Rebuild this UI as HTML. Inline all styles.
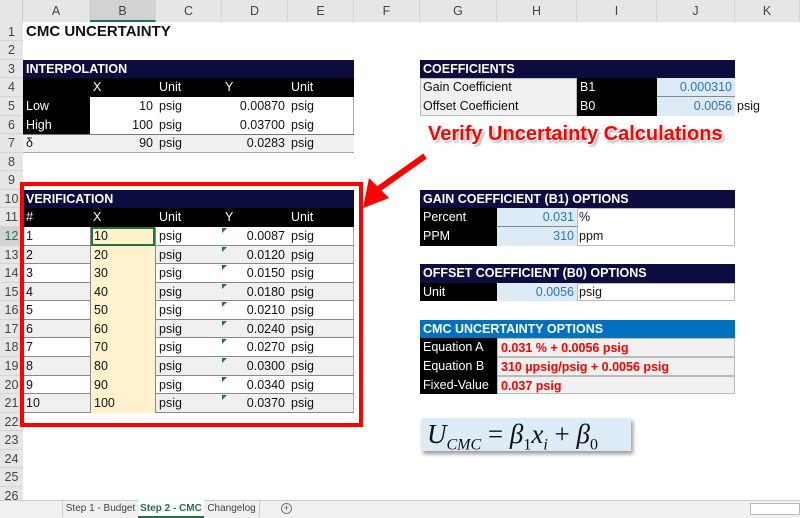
<!DOCTYPE html>
<html><head><meta charset="utf-8"><style>
*{margin:0;padding:0;box-sizing:border-box}
body{width:800px;height:518px;overflow:hidden;background:#fff;font-family:"Liberation Sans",Arial,sans-serif;font-size:12.5px;color:#111;position:relative}
.a{position:absolute;white-space:nowrap;line-height:18px}
.hdr{background:#e6e6e6;color:#444;text-align:center;font-size:12.5px}
.nv{background:#0d0c3f;color:#fff;font-weight:bold}
.bk{background:#000;color:#fff}
.gr{background:#f0f0f0}
.lb{background:#ddebf7;color:#2e75b6;text-align:right;padding-right:3px}
.r{text-align:right;padding-right:3px}
.p{padding-left:3px}
.bd{border-bottom:1px solid #888}
</style></head><body>
<div id="g"></div>
<script>
var g=document.getElementById('g'),h='';
function T(n){return 22.7+(n-1)*18.57}
var cx=[0,23,90,156,222,288,354,420,497,577,657,735,800];
var cn='ABCDEFGHIJK';
function d(x,y,w,hh,cls,txt,st){h+='<div class="a '+(cls||'')+'" style="left:'+x+'px;top:'+y+'px;width:'+w+'px;height:'+hh+'px;'+(st||'')+'">'+(txt||'')+'</div>'}
d(0,0,800,22,'hdr','', 'border-bottom:1px solid #ccc');
d(0,0,23,518,'hdr','','border-right:1px solid #ccc');
for(var i=0;i<11;i++){d(cx[i+1],0,cx[i+2]-cx[i+1],22,'hdr',cn[i],'line-height:22px;border-right:1px solid #d4d4d4;'+(i==1?'background:#d2d2d2;border-bottom:2px solid #217346;':''))}
for(var n=1;n<=26;n++){d(0,T(n),23,18.57,'hdr',n,'border-bottom:1px solid #d4d4d4;line-height:18px;'+(n==12?'color:#217346;background:#d2d2d2':''))}
d(26,T(1),300,18.6,'','CMC UNCERTAINTY','font-weight:bold;font-size:15px');
var rh=18.57;
d(23,T(3),331,rh,'nv p','INTERPOLATION');
d(23,T(4),331,rh,'bk');
d(90,T(4),66,rh,'bk p','X');d(156,T(4),66,rh,'bk p','Unit');d(222,T(4),66,rh,'bk p','Y');d(288,T(4),66,rh,'bk p','Unit');
d(23,T(5),67,rh,'bk p','Low');d(23,T(6),67,rh,'bk p','High');
d(90,T(5),264,rh*2,'','','border-right:1px solid #aaa');
d(90,T(5),66,rh,'r','10');d(156,T(5),66,rh,'p','psig');d(222,T(5),66,rh,'r','0.00870');d(288,T(5),66,rh,'p','psig');
d(90,T(6),66,rh,'r','100');d(156,T(6),66,rh,'p','psig');d(222,T(6),66,rh,'r','0.03700');d(288,T(6),66,rh,'p','psig');
d(23,T(7),331,rh,'gr','','border-top:1px solid #777;border-bottom:1px solid #aaa');
d(23,T(7),67,rh,'p','δ');d(90,T(7),66,rh,'r','90');d(156,T(7),66,rh,'p','psig');d(222,T(7),66,rh,'r','0.0283');d(288,T(7),66,rh,'p','psig');
d(23,T(10),331,rh,'nv p','VERIFICATION');
d(23,T(11),331,rh,'bk');
d(23,T(11),67,rh,'bk p','#');d(90,T(11),66,rh,'bk p','X');d(156,T(11),66,rh,'bk p','Unit');d(222,T(11),66,rh,'bk p','Y');d(288,T(11),66,rh,'bk p','Unit');
var ys=['0.0087','0.0120','0.0150','0.0180','0.0210','0.0240','0.0270','0.0300','0.0340','0.0370'];
for(var k=0;k<10;k++){var y=T(12+k);
d(23,y,331,rh,(k%2?'gr':'')+' bd','','border-right:1px solid #aaa');
d(23,y,67,rh,'p',k+1);
d(90,y,66,rh,'p',(k+1)*10,'background:#fff2cc;border-left:1px solid #888;border-right:1px solid #888;'+(k==0?'box-shadow:inset 0 0 0 2px #217346;':''));
d(156,y,66,rh,'p','psig');
d(222,y,66,rh,'r',ys[k]);d(288,y,66,rh,'p','psig');
d(222,y+1,0,0,'','','border-top:5px solid #217346;border-right:5px solid transparent');}
d(20,182,343,245,'','','border:4px solid #f00');
d(420,T(3),315,rh,'nv p','COEFFICIENTS');
d(420,T(4),157,rh*2,'gr','','border:1px solid #bbb');
d(420,T(4),157,rh,'p','Gain Coefficient');d(420,T(5),157,rh,'p','Offset Coefficient');
d(577,T(4),80,rh,'bk p','B1');d(577,T(5),80,rh,'bk p','B0');
d(657,T(4),78,rh,'lb','0.000310','border-bottom:1px solid #888');d(657,T(5),78,rh,'lb','0.0056');d(737,T(5),50,rh,'','psig');
d(420,T(10),315,rh,'nv p','GAIN COEFFICIENT (B1) OPTIONS');
d(420,T(11),77,rh*2,'bk');d(420,T(11),77,rh,'bk p','Percent');d(420,T(12),77,rh,'bk p','PPM');
d(497,T(11),80,rh,'lb','0.031','border-bottom:1px solid #888');d(497,T(12),80,rh,'lb','310');
d(577,T(11),158,rh*2,'','','border:1px solid #bbb');
d(579,T(11),80,rh,'','%');d(579,T(12),80,rh,'','ppm');
d(420,T(14),315,rh,'nv p','OFFSET COEFFICIENT (B0) OPTIONS');
d(420,T(15),77,rh,'bk p','Unit');d(497,T(15),80,rh,'lb','0.0056');
d(577,T(15),158,rh,'','','border:1px solid #bbb');d(579,T(15),80,rh,'','psig');
d(420,T(17),315,rh,'p','CMC UNCERTAINTY OPTIONS','background:#0070c0;color:#fff;font-weight:bold');
var eq=['Equation A','Equation B','Fixed-Value'],ev=['0.031 % + 0.0056 psig','310 µpsig/psig + 0.0056 psig','0.037 psig'];
for(k=0;k<3;k++){var y=T(18+k);d(420,y,77,rh,'bk p',eq[k]);d(497,y,238,rh,'gr p',ev[k],'color:#f00;font-weight:bold;border:1px solid #bbb');}
h+='<div class="a" style="left:421px;top:418px;width:210px;height:33px;background:#ddebf7;box-shadow:2px 3px 4px #999;font-family:\'Liberation Serif\',serif;font-size:27px;line-height:33px;padding-left:6px;font-style:italic">U<sub style="font-size:16px">CMC</sub> <span style="font-style:normal">=</span> β<sub style="font-size:16px;font-style:normal">1</sub>x<sub style="font-size:16px">i</sub> <span style="font-style:normal">+</span> β<sub style="font-size:16px;font-style:normal">0</sub></div>';
d(428,121,300,26,'','Verify Uncertainty Calculations','color:#f00;font-weight:bold;font-size:20px;line-height:26px;text-shadow:1px 1px 0 #fff,-1px -1px 0 #fff,2px 2px 3px #888');
h+='<svg class="a" style="left:355px;top:150px" width="80" height="70"><path d="M70 6 L22 40" stroke="#f00" stroke-width="6" fill="none"/><path d="M8 58 L14 28 L34 48 Z" fill="#f00"/></svg>';
d(0,500,800,18,'','','background:#f0f0f0;border-top:1px solid #ccc');
d(62,501,76,16,'','Step 1 - Budget','font-size:10px;color:#444;text-align:center;line-height:16px;border-left:1px solid #ccc');
d(138,500,66,18,'','Step 2 - CMC','font-size:10px;color:#217346;font-weight:bold;text-align:center;line-height:17px;background:#fff;border-bottom:2px solid #217346');
d(204,501,56,16,'','Changelog','font-size:10px;color:#444;text-align:center;line-height:16px;border-right:1px solid #ccc');
d(281,503,11,11,'','+','border:1px solid #777;border-radius:50%;font-size:9px;line-height:9px;text-align:center;color:#555');
d(750,503,50,12,'','','background:#fff;border:1px solid #bbb');
g.innerHTML=h;
</script>
</body></html>
